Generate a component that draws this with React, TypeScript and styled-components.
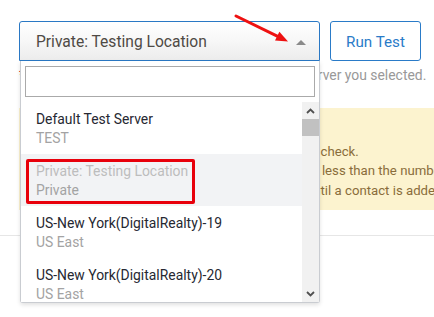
import { FC } from "react";
import styled, { createGlobalStyle } from "styled-components";

const GlobalStyle = createGlobalStyle`
  html, body {
    margin: 0;
    padding: 0;
    background: #ffffff;
    overflow: hidden;
  }
  body {
    font-family: Roboto, "Liberation Sans", Arial, sans-serif;
  }
`;

const Page = styled.div`
  position: relative;
  width: 434px;
  height: 317px;
  overflow: hidden;
`;

const Section = styled.div`
  padding: 21px 0 0 19px;
`;

const Row = styled.div`
  display: flex;
  gap: 10px;
`;

const Select = styled.div`
  box-sizing: border-box;
  width: 301px;
  height: 40px;
  display: flex;
  align-items: center;
  justify-content: space-between;
  padding: 2px 13px 0 16px;
  border: 1px solid #2a78c4;
  border-radius: 3px 3px 0 0;
  background: linear-gradient(#ffffff 0%, #f7f7f7 50%, #ececec 100%);
  color: #4f4a45;
  font-size: 15.6px;
`;

const Caret = styled.span`
  width: 0;
  height: 0;
  border-left: 5px solid transparent;
  border-right: 5px solid transparent;
  border-bottom: 5px solid #8a8a8a;
`;

const Button = styled.button`
  box-sizing: border-box;
  width: 91px;
  height: 40px;
  border: 1px solid #2a7bc8;
  border-radius: 3px;
  background: #ffffff;
  color: #2a7bc8;
  font-family: inherit;
  font-size: 15.2px;
  padding: 2px 0 0;
`;

const Hint = styled.p`
  margin: 6px 0 0;
  color: #999999;
  font-size: 13.9px;
  line-height: 16px;
  white-space: nowrap;
`;

const Required = styled.span`
  color: #e02020;
`;

const Notice = styled.div`
  box-sizing: border-box;
  width: 440px;
  margin-top: 25px;
  padding: 14px 12px 10px;
  background: #fcf3cf;
  color: #8a6d3b;
  font-size: 13.2px;
  line-height: 19.5px;
  white-space: nowrap;
`;

const NoticeTitle = styled.div`
  font-weight: 700;
`;

const Divider = styled.hr`
  margin: 25px 0 0;
  border: 0;
  border-top: 1px solid #e6e6e6;
`;

const Dropdown = styled.div`
  position: absolute;
  left: 20px;
  top: 61px;
  box-sizing: border-box;
  width: 300px;
  height: 242px;
  display: flex;
  flex-direction: column;
  background: #ffffff;
  border: 1px solid #c9ccd1;
  border-top: 0;
  border-radius: 0 0 3px 3px;
  box-shadow: 0 2px 4px rgba(0, 0, 0, 0.12);
`;

const Search = styled.input`
  box-sizing: border-box;
  flex: none;
  margin: 5px 4px 5px;
  height: 31px;
  border: 1px solid #aaaaaa;
  outline: none;
`;

const ListArea = styled.div`
  flex: 1;
  display: flex;
  min-height: 0;
`;

const Items = styled.ul`
  flex: 1;
  margin: 0;
  padding: 0;
  list-style: none;
  overflow: hidden;
`;

const Item = styled.li<{ $active?: boolean }>`
  height: 52px;
  box-sizing: border-box;
  padding: 8px 16px 0 15px;
  background: ${({ $active }) => ($active ? "#f2f3f5" : "#ffffff")};
`;

const ItemTitle = styled.div<{ $muted?: boolean }>`
  font-size: 13.9px;
  line-height: 18.5px;
  color: ${({ $muted }) => ($muted ? "#bdbdbd" : "#262832")};
`;

const ItemSub = styled.div`
  font-size: 13.9px;
  line-height: 18.5px;
  color: #a3a3a3;
`;

const Scrollbar = styled.div`
  width: 17px;
  display: flex;
  flex-direction: column;
  background: #f1f1f1;
`;

const ScrollArrow = styled.div`
  height: 17px;
  display: flex;
  align-items: center;
  justify-content: center;
`;

const Thumb = styled.div`
  height: 17px;
  background: #c1c1c1;
`;

const Track = styled.div`
  flex: 1;
`;

const RedBox = styled.div`
  position: absolute;
  left: 26px;
  top: 159px;
  width: 169px;
  height: 45px;
  box-sizing: border-box;
  border: 3px solid #e8000b;
  border-radius: 2px;
`;

const Arrow = styled.svg`
  position: absolute;
  left: 228px;
  top: 8px;
`;

const servers = [
  { title: "Default Test Server", sub: "TEST" },
  { title: "Private: Testing Location", sub: "Private", active: true },
  { title: "US-New York(DigitalRealty)-19", sub: "US East" },
  { title: "US-New York(DigitalRealty)-20", sub: "US East" },
];

const App: FC = () => (
  <Page>
    <GlobalStyle />
    <Section>
      <Row>
        <Select>
          Private: Testing Location
          <Caret />
        </Select>
        <Button>Run Test</Button>
      </Row>
      <Hint>
        <Required>*</Required> The test will run from the remote monitoring server you selected.
      </Hint>
      <Notice>
        <NoticeTitle>Note:</NoticeTitle>
        <div>An alert email is sent to your contacts after every check.</div>
        <div>If the number of all our activated alert contacts is less than the number of servers,</div>
        <div>The alert notification emails will be sent to you until a contact is added.</div>
      </Notice>
    </Section>
    <Divider />

    <Dropdown>
      <Search />
      <ListArea>
        <Items>
          {servers.map((s) => (
            <Item key={s.title} $active={s.active}>
              <ItemTitle $muted={s.active}>{s.title}</ItemTitle>
              <ItemSub>{s.sub}</ItemSub>
            </Item>
          ))}
        </Items>
        <Scrollbar>
          <ScrollArrow>
            <svg width="9" height="6" viewBox="0 0 9 6">
              <path d="M1 5 L4.5 1.5 L8 5" fill="none" stroke="#505050" strokeWidth="1.8" />
            </svg>
          </ScrollArrow>
          <Thumb />
          <Track />
          <ScrollArrow>
            <svg width="9" height="6" viewBox="0 0 9 6">
              <path d="M1 1 L4.5 4.5 L8 1" fill="none" stroke="#505050" strokeWidth="1.8" />
            </svg>
          </ScrollArrow>
        </Scrollbar>
      </ListArea>
    </Dropdown>

    <RedBox />
    <Arrow width="70" height="40" viewBox="0 0 70 40">
      <line x1="8" y1="8" x2="49.2" y2="28.2" stroke="#ee1111" strokeWidth="3" strokeLinecap="round" />
      <polygon points="60,33.5 47,32.6 51.4,23.8" fill="#ee1111" />
    </Arrow>
  </Page>
);

export default App;
